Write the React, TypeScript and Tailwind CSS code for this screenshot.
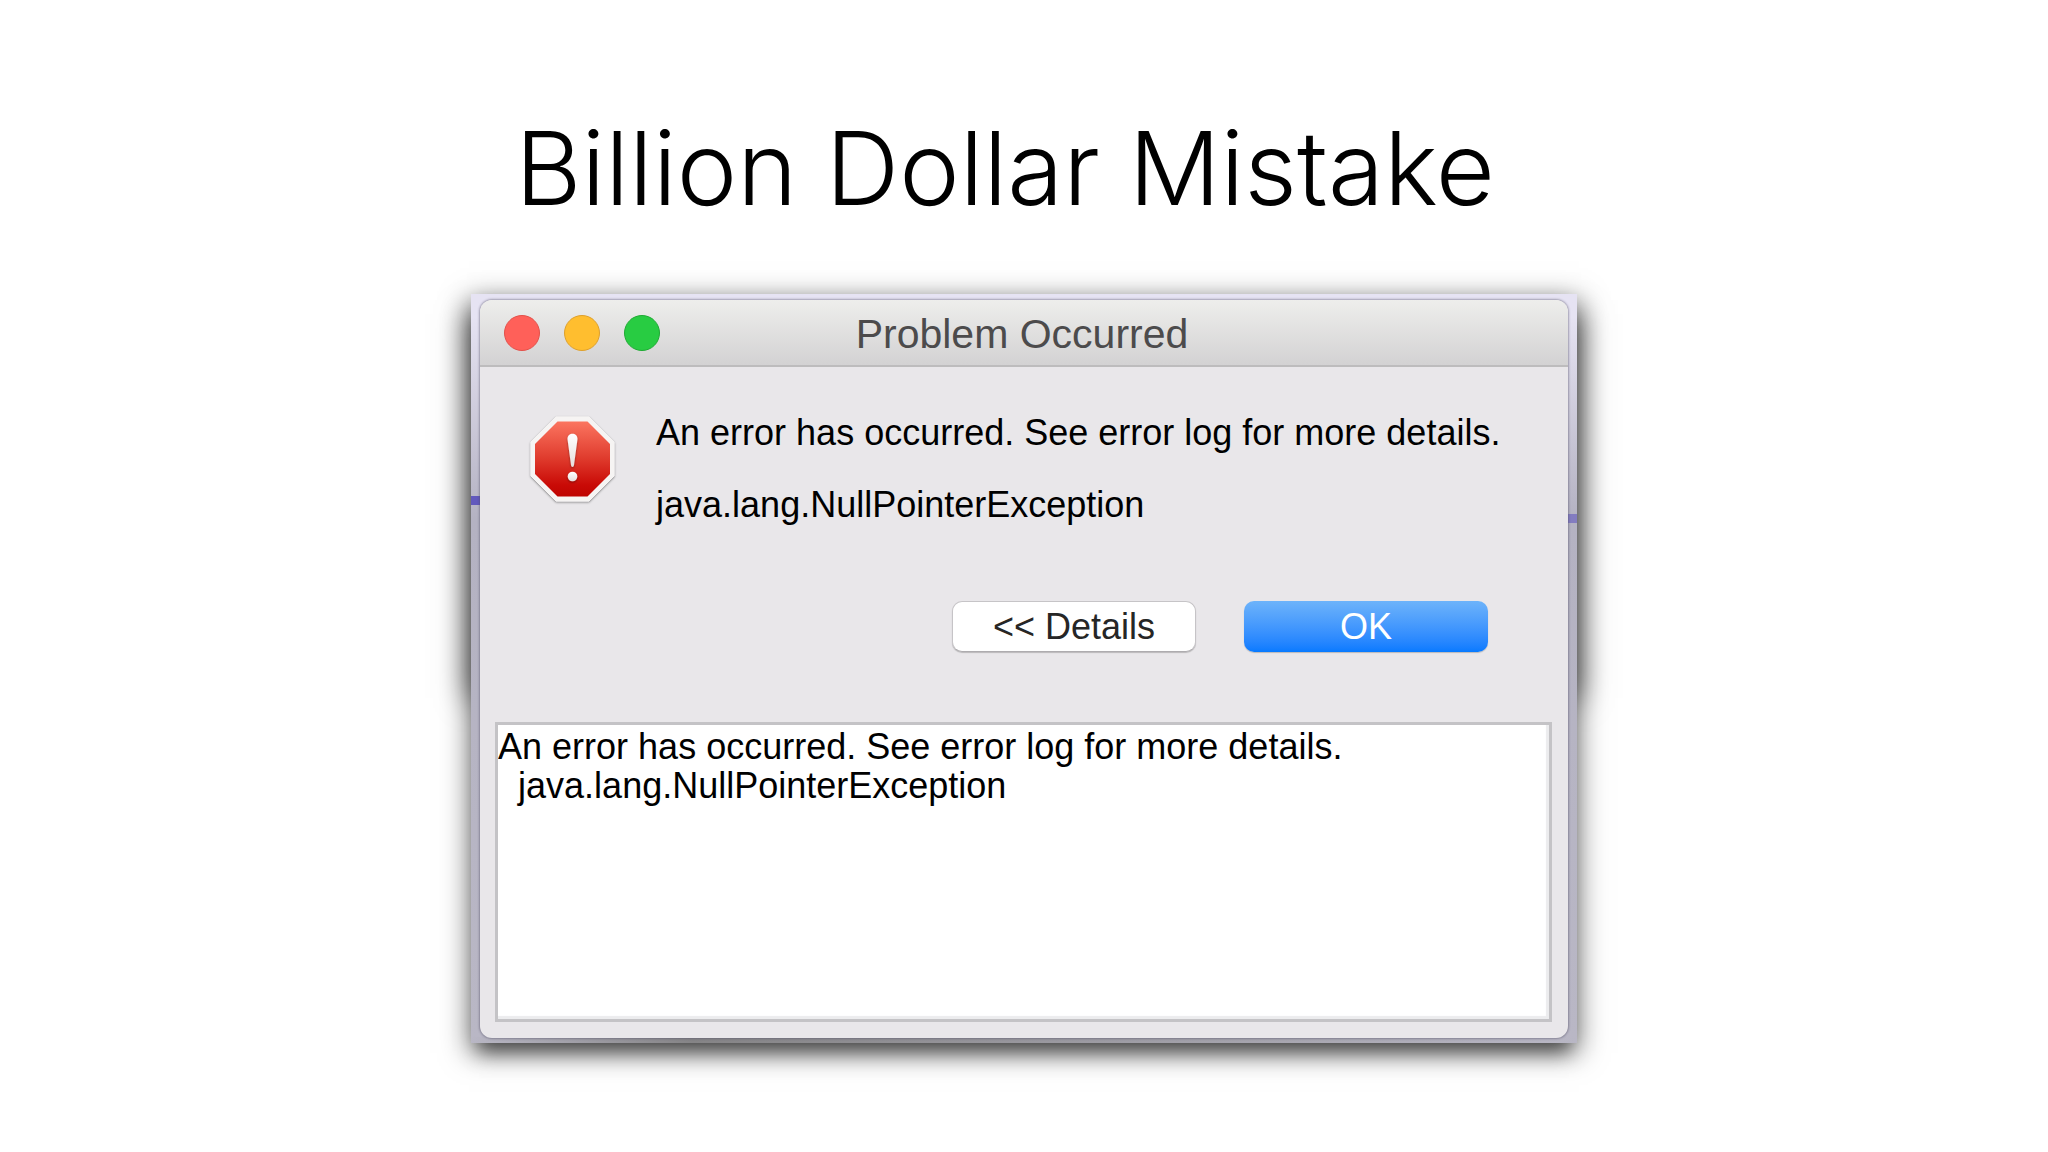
import React from "react";

const MESSAGE = "An error has occurred. See error log for more details.";
const EXCEPTION = "java.lang.NullPointerException";

function StopIcon() {
  return (
    <svg viewBox="0 0 90 90" className="mt-0.5 h-[90px] w-[90px] shrink-0" aria-hidden="true">
      <defs>
        <linearGradient id="stop-fill" x1="0" y1="0" x2="0" y2="1">
          <stop offset="0" stopColor="#fb7560" />
          <stop offset="0.5" stopColor="#df3a2c" />
          <stop offset="0.85" stopColor="#c90a06" />
          <stop offset="1" stopColor="#bf0400" />
        </linearGradient>
        <linearGradient id="stop-mark" x1="0" y1="0" x2="0" y2="1">
          <stop offset="0" stopColor="#ffffff" />
          <stop offset="1" stopColor="#e6dedd" />
        </linearGradient>
        <filter id="stop-shadow" x="-20%" y="-20%" width="140%" height="140%">
          <feDropShadow dx="0" dy="1" stdDeviation="1" floodColor="#000" floodOpacity="0.4" />
        </filter>
      </defs>
      <path
        d="M28 2H61L86 27V61L61 86H28L3 61V27Z"
        fill="#f6f4f3"
        stroke="#f6f4f3"
        strokeLinejoin="round"
        filter="url(#stop-shadow)"
      />
      <path d="M29.500 6.500H59.500L82 29V59L59.500 81.500H29.500L7 59V29Z" fill="url(#stop-fill)" />
      <g fill="url(#stop-mark)" filter="url(#stop-shadow)">
        <path d="M39.500 24C39.500 17 49.500 17 49.500 24L46 50C45.700 52.500 43.300 52.500 43 50Z" />
        <circle cx="44.500" cy="61.500" r="4.800" />
      </g>
    </svg>
  );
}

function TitleBar({ title }: { title: string }) {
  return (
    <header className="grid h-[67px] grid-cols-[1fr_auto_1fr] items-center border-b-2 border-[#bdbcbd] bg-linear-to-b from-[#eeeeec] to-[#d3d2d3] pr-7 pl-6">
      <div className="flex gap-6">
        <button aria-label="Close" className="h-9 w-9 rounded-full border border-[#e2504a] bg-[#ff6059]" />
        <button aria-label="Minimize" className="h-9 w-9 rounded-full border border-[#dea02c] bg-[#ffbe2f]" />
        <button aria-label="Zoom" className="h-9 w-9 rounded-full border border-[#1faa34] bg-[#28cc42]" />
      </div>
      <h2 className="pt-0.5 text-[41px] leading-10 text-[#4c4b4c]">{title}</h2>
    </header>
  );
}

function ErrorDialog() {
  return (
    <div className="relative isolate mx-auto w-[54%] px-[9px] pt-[6px] pb-[5px] shadow-[0_8px_26px_2px_rgba(0,0,0,0.5),0_16px_18px_-8px_rgba(0,0,0,0.5)]">
      {/* darker shadow of the window behind this one */}
      <div className="absolute inset-x-0 top-6 -z-10 h-[376px] shadow-[0_0_28px_4px_rgba(0,0,0,0.5)]" />
      <div className="absolute inset-0 -z-10 bg-linear-to-b from-[#e6e3f3] from-3% via-[#b4b2c2] via-30% to-[#b9b7c5]" />
      <div className="absolute inset-x-0 bottom-0 -z-10 h-[6px] bg-linear-to-r from-transparent via-[#858486] via-20% to-transparent" />
      <span className="absolute top-[202px] left-0 h-[9px] w-[9px] bg-[#6259bd]" />
      <span className="absolute top-[220px] right-0 h-[9px] w-[9px] bg-[#837cc0]" />

      <section className="relative overflow-hidden rounded-xl bg-[#e9e7ea] shadow-[0_0_2px_1px_rgba(80,78,100,0.45)]">
        <TitleBar title="Problem Occurred" />
        <div className="flex items-start gap-[38px] px-12 pt-[46px]">
          <StopIcon />
          <div className="flex flex-col gap-8 text-[36px] leading-10 whitespace-nowrap text-black">
            <p>{MESSAGE}</p>
            <p>{EXCEPTION}</p>
          </div>
        </div>
        <div className="mt-[76px] flex justify-end gap-12 pr-20 text-[36px] leading-10">
          <button className="h-[51px] w-[244px] rounded-[10px] border border-[#c6c4c7] border-b-[#aeacaf] bg-white text-[#262626] shadow-[0_1px_1px_rgba(0,0,0,0.2)]">
            &lt;&lt; Details
          </button>
          <button className="h-[51px] w-[244px] rounded-[10px] bg-linear-to-b from-[#6db3fa] to-[#067aff] text-white shadow-[0_1px_1px_rgba(0,0,0,0.2)]">
            OK
          </button>
        </div>
        <div className="pt-[70px] pr-4 pb-4 pl-[15px]">
          <textarea
            readOnly
            aria-label="Error details"
            value={`${MESSAGE}\n  ${EXCEPTION}`}
            className="block h-[300px] w-full resize-none border-3 border-[#c4c3c6] bg-white pt-0.5 text-[36px] leading-[39px] text-black shadow-[inset_-3px_-3px_1px_#ececee] outline-none"
          />
        </div>
      </section>
    </div>
  );
}

export default function App() {
  return (
    <main className="min-h-screen bg-white pt-[104px] pb-20 font-['Liberation_Sans',Arial,sans-serif]">
      <h1 className="mb-[62px] pr-[38px] text-center font-[Inter,sans-serif] text-[102px] leading-[128px] font-light text-black">
        Billion Dollar Mistake
      </h1>
      <ErrorDialog />
    </main>
  );
}
